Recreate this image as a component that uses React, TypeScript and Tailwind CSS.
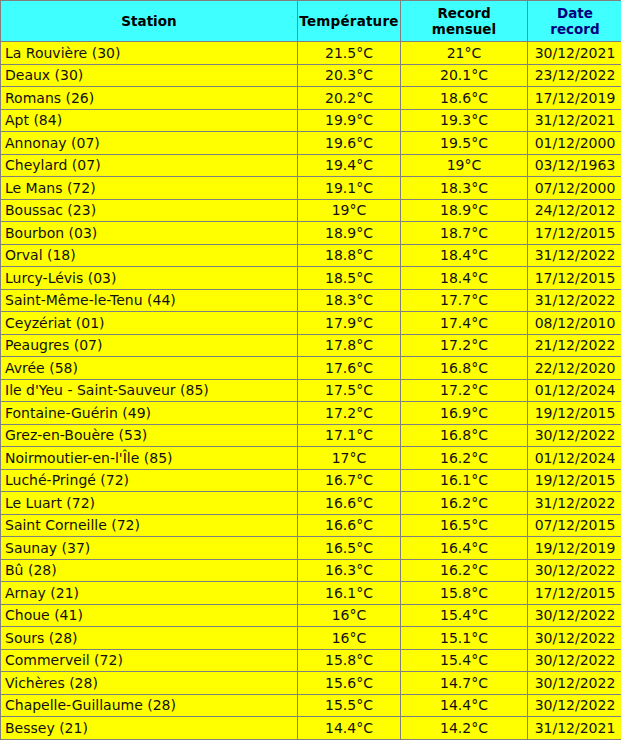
import React from 'react';

const rows: [string, string, string, string][] = [
  ['La Rouvière (30)', '21.5°C', '21°C', '30/12/2021'],
  ['Deaux (30)', '20.3°C', '20.1°C', '23/12/2022'],
  ['Romans (26)', '20.2°C', '18.6°C', '17/12/2019'],
  ['Apt (84)', '19.9°C', '19.3°C', '31/12/2021'],
  ['Annonay (07)', '19.6°C', '19.5°C', '01/12/2000'],
  ['Cheylard (07)', '19.4°C', '19°C', '03/12/1963'],
  ['Le Mans (72)', '19.1°C', '18.3°C', '07/12/2000'],
  ['Boussac (23)', '19°C', '18.9°C', '24/12/2012'],
  ['Bourbon (03)', '18.9°C', '18.7°C', '17/12/2015'],
  ['Orval (18)', '18.8°C', '18.4°C', '31/12/2022'],
  ['Lurcy-Lévis (03)', '18.5°C', '18.4°C', '17/12/2015'],
  ['Saint-Même-le-Tenu (44)', '18.3°C', '17.7°C', '31/12/2022'],
  ['Ceyzériat (01)', '17.9°C', '17.4°C', '08/12/2010'],
  ['Peaugres (07)', '17.8°C', '17.2°C', '21/12/2022'],
  ['Avrée (58)', '17.6°C', '16.8°C', '22/12/2020'],
  ["Ile d'Yeu - Saint-Sauveur (85)", '17.5°C', '17.2°C', '01/12/2024'],
  ['Fontaine-Guérin (49)', '17.2°C', '16.9°C', '19/12/2015'],
  ['Grez-en-Bouère (53)', '17.1°C', '16.8°C', '30/12/2022'],
  ["Noirmoutier-en-l'Île (85)", '17°C', '16.2°C', '01/12/2024'],
  ['Luché-Pringé (72)', '16.7°C', '16.1°C', '19/12/2015'],
  ['Le Luart (72)', '16.6°C', '16.2°C', '31/12/2022'],
  ['Saint Corneille (72)', '16.6°C', '16.5°C', '07/12/2015'],
  ['Saunay (37)', '16.5°C', '16.4°C', '19/12/2019'],
  ['Bû (28)', '16.3°C', '16.2°C', '30/12/2022'],
  ['Arnay (21)', '16.1°C', '15.8°C', '17/12/2015'],
  ['Choue (41)', '16°C', '15.4°C', '30/12/2022'],
  ['Sours (28)', '16°C', '15.1°C', '30/12/2022'],
  ['Commerveil (72)', '15.8°C', '15.4°C', '30/12/2022'],
  ['Vichères (28)', '15.6°C', '14.7°C', '30/12/2022'],
  ['Chapelle-Guillaume (28)', '15.5°C', '14.4°C', '30/12/2022'],
  ['Bessey (21)', '14.4°C', '14.2°C', '31/12/2021'],
];

export default function App() {
  return (
    <div className="w-[621px] h-[740px] overflow-hidden bg-white font-['DejaVu_Sans',Verdana,sans-serif]">
      <table className="w-[622px] border-collapse table-fixed">
        <colgroup>
          <col className="w-[297px]" />
          <col className="w-[103px]" />
          <col className="w-[127px]" />
          <col className="w-[95px]" />
        </colgroup>
        <thead>
          <tr className="h-[41px] bg-[#40ffff] font-bold text-[13.5px] leading-[16px]">
            <th className="border border-[#808080] text-black">Station</th>
            <th className="border border-[#808080] text-black tracking-[0.2px]">Température</th>
            <th className="border border-[#808080] text-black">Record<br />mensuel</th>
            <th className="border border-[#808080] text-[#000080]">Date<br />record</th>
          </tr>
        </thead>
        <tbody>
          {rows.map(r => (
            <tr key={r[0]} className="h-[22.5px] bg-[#ffff00] text-[#111] text-[14px] leading-[16px]">
              <td className="border border-[#808080] px-[4px] whitespace-nowrap">{r[0]}</td>
              <td className="border border-[#808080] text-center">{r[1]}</td>
              <td className="border border-[#808080] text-center">{r[2]}</td>
              <td className="border border-[#808080] text-center">{r[3]}</td>
            </tr>
          ))}
        </tbody>
      </table>
    </div>
  );
}
